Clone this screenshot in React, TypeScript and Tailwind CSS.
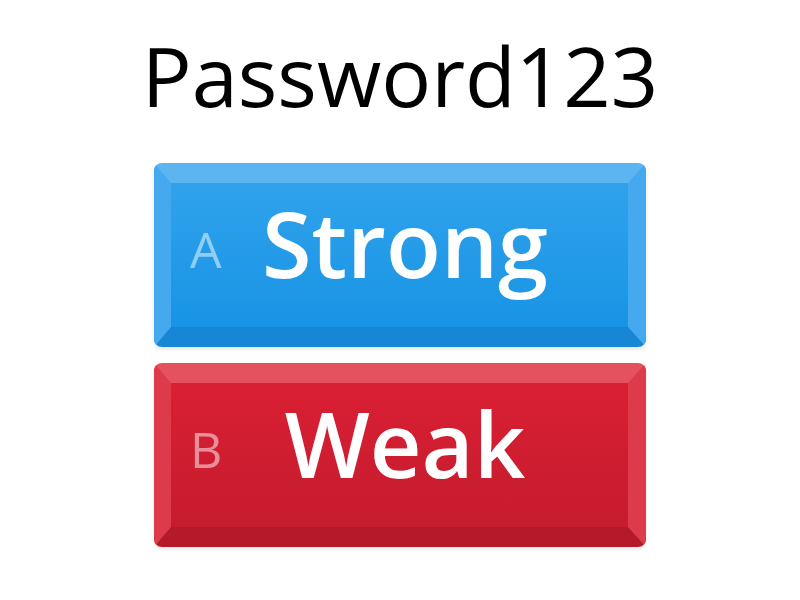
import React from 'react';

type Choice = {
  key: string;
  label: string;
  bevel: string;
  face: string;
};

const choices: Choice[] = [
  {
    key: 'A',
    label: 'Strong',
    bevel: 'border-t-[#5cb5f1] border-l-[#44a9ee] border-r-[#44a9ee] border-b-[#1786d4]',
    face: 'bg-gradient-to-b from-[#2fa2eb] to-[#1794e5]',
  },
  {
    key: 'B',
    label: 'Weak',
    bevel: 'border-t-[#e4515f] border-l-[#dd3a4b] border-r-[#dd3a4b] border-b-[#b41a29]',
    face: 'bg-gradient-to-b from-[#da1f33] to-[#c51c2e]',
  },
];

const AnswerButton: React.FC<{ choice: Choice }> = ({ choice }) => (
  <button
    type="button"
    className={`w-[492px] h-[184px] rounded-lg overflow-hidden border-solid border-t-[20px] border-b-[20px] border-l-[17px] border-r-[18px] shadow-[0_2px_4px_rgba(0,0,0,0.12)] ${choice.bevel}`}
  >
    <div className={`h-full w-full flex items-start pt-[15px] pl-[19px] pr-[40px] ${choice.face}`}>
      <span className="w-[32px] mt-[26px] text-[50px] leading-none text-white/50 text-left">
        {choice.key}
      </span>
      <span className="flex-1 text-center text-[90px] leading-none font-semibold text-white">
        {choice.label}
      </span>
    </div>
  </button>
);

export default function App() {
  return (
    <div className="w-[800px] h-[600px] bg-white flex flex-col items-center font-['Open_Sans',sans-serif]">
      <h1 className="mt-[33px] text-[83px] leading-none font-normal text-black">Password123</h1>
      <div className="mt-[47px] flex flex-col gap-4">
        {choices.map(c => (
          <AnswerButton key={c.key} choice={c} />
        ))}
      </div>
    </div>
  );
}
